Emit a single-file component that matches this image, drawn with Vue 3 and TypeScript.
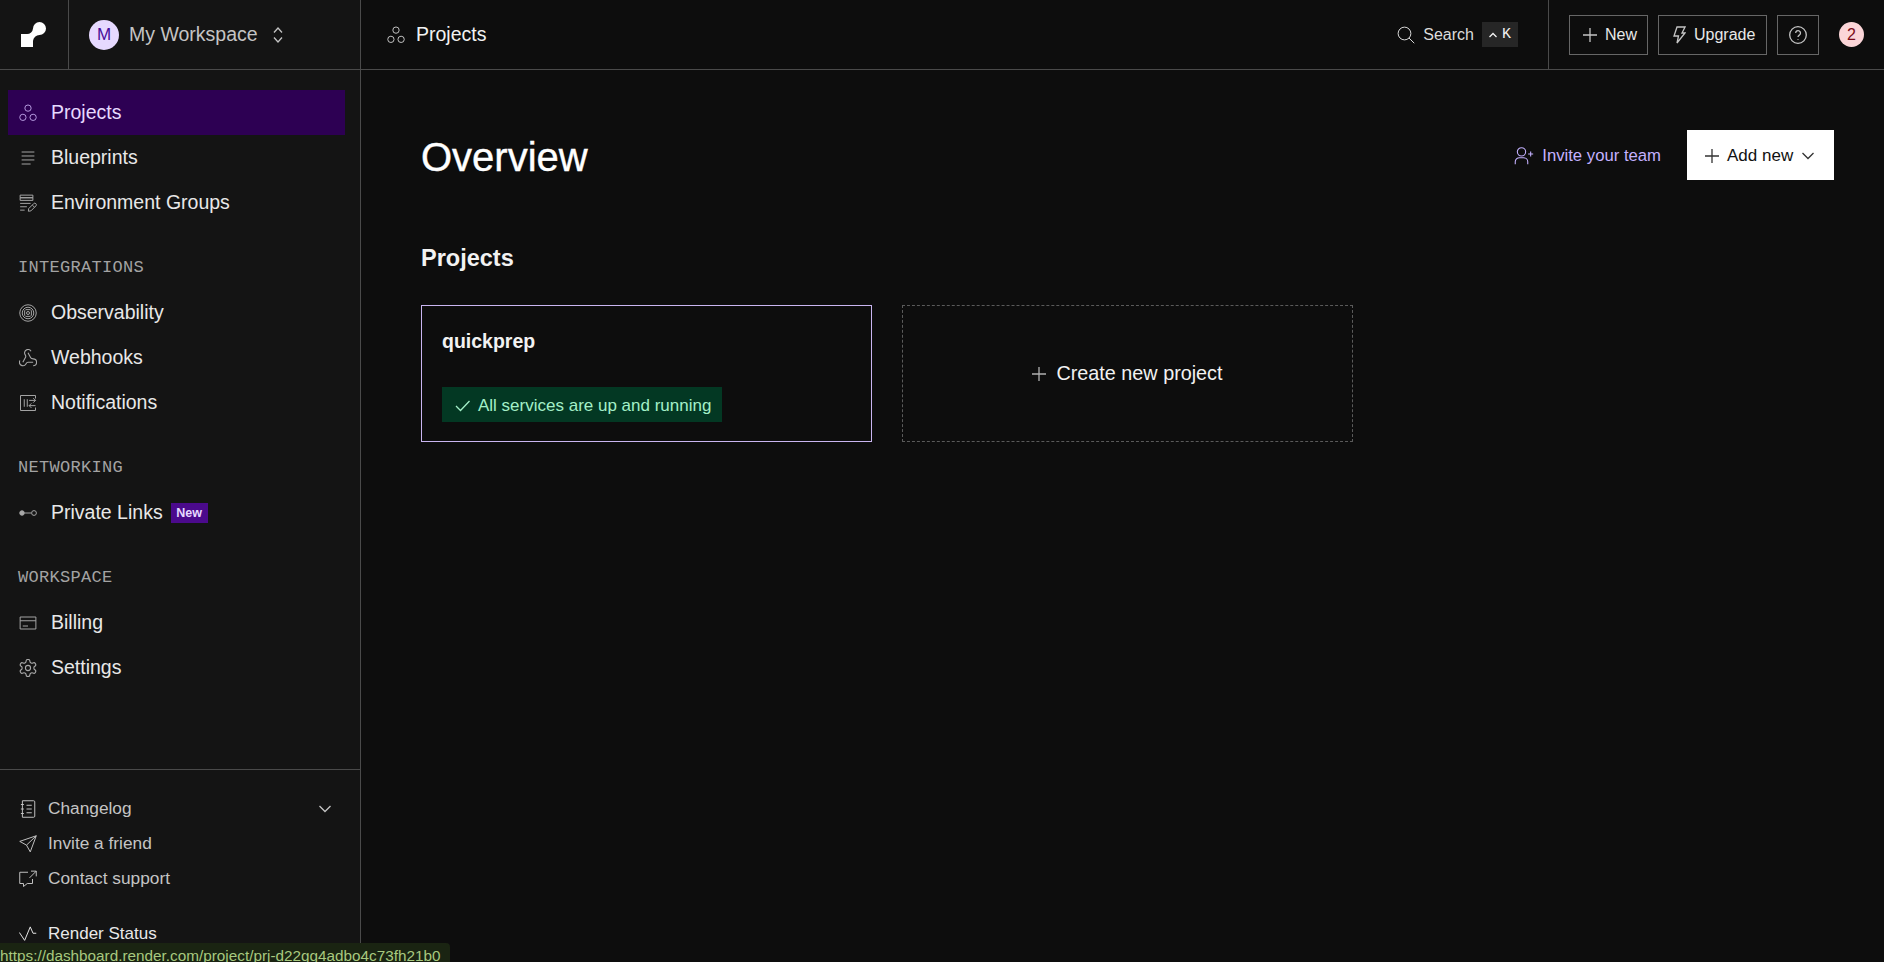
<script setup lang="ts">
interface NavItem {
  label: string
  icon: string
  active?: boolean
  tag?: string
}

interface NavSection {
  title?: string
  items: NavItem[]
}

const sections: NavSection[] = [
  {
    items: [
      { label: 'Projects', icon: 'projects', active: true },
      { label: 'Blueprints', icon: 'blueprints' },
      { label: 'Environment Groups', icon: 'env' },
    ],
  },
  {
    title: 'INTEGRATIONS',
    items: [
      { label: 'Observability', icon: 'observe' },
      { label: 'Webhooks', icon: 'webhook' },
      { label: 'Notifications', icon: 'notify' },
    ],
  },
  {
    title: 'NETWORKING',
    items: [{ label: 'Private Links', icon: 'link', tag: 'New' }],
  },
  {
    title: 'WORKSPACE',
    items: [
      { label: 'Billing', icon: 'billing' },
      { label: 'Settings', icon: 'settings' },
    ],
  },
]

const footerLinks = [
  { label: 'Changelog', icon: 'changelog' },
  { label: 'Invite a friend', icon: 'send' },
  { label: 'Contact support', icon: 'support' },
]

const iconPaths: Record<string, string> = {
  projects: 'M12 1.300a4.200 4.200 0 1 1 0 8.400 4.200 4.200 0 0 1 0-8.400zM5.200 13.600a4.200 4.200 0 1 1 0 8.400 4.200 4.200 0 0 1 0-8.400zM18.800 13.600a4.200 4.200 0 1 1 0 8.400 4.200 4.200 0 0 1 0-8.400z',
  blueprints: 'M3.500 4h17M3.500 9.300h17M3.500 14.600h17M3.500 20h12',
  env: 'M1.500 1.500h17v3.500h-17zM1.500 5h17v3.500h-17zM1.500 12.500h14M1.500 17h9M1.500 21.500h6M12.500 23l.4-3.500 6.600-6.600a2 2 0 0 1 3 3l-6.600 6.600zM18 15l2.500 2.500',
  observe: 'M12 1a11 11 0 1 0 0 22 11 11 0 0 0 0-22zM12 4.300a7.700 7.700 0 1 0 0 15.400 7.700 7.700 0 0 0 0-15.400zM9 7.500h6l1.500 1.500v6L15 16.500H9L7.500 15V9zM12 10a2 2 0 1 0 0 4 2 2 0 0 0 0-4z',
  webhook: 'M18 16.980h-5.990c-1.100 0-1.950.94-2.480 1.900A4 4 0 0 1 2 17c.01-.7.2-1.400.57-2M6 17l3.130-5.780c.53-.97.1-2.180-.5-3.100a4 4 0 1 1 6.890-4.060M12 6l3.130 5.730C15.660 12.700 16.900 13 18 13a4 4 0 0 1 0 8',
  notify: 'M22 6V2H2v20h20v-4M7 7v10M11 7v10M13.500 8.500H22M19 5.500l3 3-3 3M22 15.500h-8.500M16.500 12.500l-3 3 3 3',
  link: '',
  billing: 'M1.500 4h21v16h-21zM1.500 9h21M5 16h7',
  settings: 'M12.220 2h-.44a2 2 0 0 0-2 2v.18a2 2 0 0 1-1 1.730l-.43.25a2 2 0 0 1-2 0l-.15-.08a2 2 0 0 0-2.730.73l-.22.38a2 2 0 0 0 .73 2.730l.15.1a2 2 0 0 1 1 1.720v.51a2 2 0 0 1-1 1.740l-.15.09a2 2 0 0 0-.73 2.730l.22.38a2 2 0 0 0 2.730.73l.15-.08a2 2 0 0 1 2 0l.43.25a2 2 0 0 1 1 1.730V20a2 2 0 0 0 2 2h.44a2 2 0 0 0 2-2v-.18a2 2 0 0 1 1-1.730l.43-.25a2 2 0 0 1 2 0l.15.08a2 2 0 0 0 2.730-.73l.22-.39a2 2 0 0 0-.73-2.730l-.15-.08a2 2 0 0 1-1-1.740v-.5a2 2 0 0 1 1-1.740l.15-.09a2 2 0 0 0 .73-2.730l-.22-.38a2 2 0 0 0-2.730-.73l-.15.08a2 2 0 0 1-2 0l-.43-.25a2 2 0 0 1-1-1.730V4a2 2 0 0 0-2-2zM12 9a3 3 0 1 0 0 6 3 3 0 0 0 0-6z',
  changelog: 'M4.500 1h15a1.500 1.500 0 0 1 1.500 1.500v19a1.500 1.500 0 0 1-1.500 1.500h-15zM2.500 6h4M2.500 12h4M2.500 18h4M10 7h7M10 12h7M10 17h7',
  send: 'M23 1 1 8.500l9 5 5 9zM23 1 10 13.500',
  support: 'M12 3H1v15h5v4l5-4h7v-6M16 1.500h7v7M23 1.500l-9 9',
  status: 'M.5 10 7.500 20.500 15 2.500 18.700 11H23',
}

// these two are drawn on a 20 unit box inside the 24 unit grid
const viewBoxFor = (icon: string) =>
  icon === 'settings' || icon === 'webhook' ? '1.500 1.500 21 21' : '0 0 24 24'
</script>

<template>
  <div class="app">
    <header class="topbar">
      <div class="brand">
        <svg class="logo" viewBox="0 0 25 25" width="25" height="25">
          <path d="M12 25H0V12h6a6 6 0 0 0 6-5.500 6.500 6.500 0 1 1 6.500 6.500 6.500 6.500 0 0 0-6.500 6z" fill="#fff" />
        </svg>
      </div>
      <div class="workspace">
        <span class="ws-avatar">M</span>
        <span class="ws-name">My Workspace</span>
        <svg viewBox="0 0 12 18" width="12" height="18" class="stroke ws-caret"><path d="M2 6.500 6 2l4 4.500M2 11.500 6 16l4-4.500" /></svg>
      </div>
      <div class="crumb">
        <svg viewBox="0 0 24 24" width="18" height="18" class="stroke"><path :d="iconPaths.projects" /></svg>
        <span>Projects</span>
      </div>
      <div class="search">
        <svg viewBox="0 0 24 24" width="18" height="18" class="stroke"><path d="M10 1.500a8.500 8.500 0 1 0 0 17 8.500 8.500 0 0 0 0-17zM16 16l7 7" /></svg>
        <span>Search</span>
        <kbd><svg viewBox="0 0 10 10" width="10" height="10" class="stroke"><path d="M1.500 7 5 3.500 8.500 7" /></svg>K</kbd>
      </div>
      <div class="actions">
        <button class="ghost">
          <svg viewBox="0 0 14 14" width="14" height="14" class="stroke"><path d="M7 0v14M0 7h14" /></svg>New
        </button>
        <button class="ghost upgrade">
          <svg viewBox="0 0 14 18" width="14" height="18" class="stroke"><path d="M5 1h8l-3 6h3L5 17l1.500-7H2z" /></svg>Upgrade
        </button>
        <button class="ghost help">
          <svg viewBox="0 0 18 18" width="18" height="18" class="stroke"><circle cx="9" cy="9" r="8.300" /><path d="M6.700 7a2.400 2.400 0 1 1 3.600 2.100c-.8.500-1.300 1-1.300 2M9 13v.8" /></svg>
        </button>
        <span class="user-dot">2</span>
      </div>
    </header>

    <div class="body">
      <aside class="sidebar">
        <nav class="nav">
          <section v-for="(section, i) in sections" :key="i" class="nav-section">
            <h4 v-if="section.title">{{ section.title }}</h4>
            <a v-for="item in section.items" :key="item.label" class="nav-item" :class="{ active: item.active }">
              <svg v-if="item.icon === 'link'" viewBox="0 0 24 24" width="18" height="18" class="stroke">
                <circle cx="4" cy="12" r="3" fill="currentColor" /><path d="M7 12h9" /><circle cx="20" cy="12" r="3.200" />
              </svg>
              <svg v-else :viewBox="viewBoxFor(item.icon)" width="18" height="18" class="stroke"><path :d="iconPaths[item.icon]" /></svg>
              <span>{{ item.label }}</span>
              <em v-if="item.tag">{{ item.tag }}</em>
            </a>
          </section>
        </nav>
        <div class="side-footer">
          <a v-for="link in footerLinks" :key="link.label" class="foot-link">
            <svg viewBox="0 0 24 24" width="18" height="18" class="stroke"><path :d="iconPaths[link.icon]" /></svg>
            <span>{{ link.label }}</span>
            <svg v-if="link.icon === 'changelog'" class="stroke foot-caret" viewBox="0 0 12 12" width="12" height="12"><path d="M.5 3 6 8.500 11.500 3" /></svg>
          </a>
          <a class="foot-link status">
            <svg viewBox="0 0 24 24" width="18" height="18" class="stroke"><path :d="iconPaths.status" /></svg>
            <span>Render Status</span>
          </a>
        </div>
      </aside>

      <main class="main">
        <div class="heading">
          <h1>Overview</h1>
          <a class="invite">
            <svg viewBox="0 0 24 24" width="20" height="20" class="stroke"><path d="M9 2a5 5 0 1 0 0 10 5 5 0 0 0 0-10zM1.500 22v-3a5 5 0 0 1 5-5h5a5 5 0 0 1 5 5v3M20 6.500v6M17 9.500h6" /></svg>
            Invite your team
          </a>
          <button class="add">
            <svg viewBox="0 0 14 14" width="14" height="14" class="stroke"><path d="M7 0v14M0 7h14" /></svg>
            Add new
            <svg viewBox="0 0 12 12" width="12" height="12" class="stroke chev"><path d="M.5 3 6 8.500 11.500 3" /></svg>
          </button>
        </div>
        <h2>Projects</h2>
        <div class="cards">
          <article class="card">
            <h3>quickprep</h3>
            <span class="badge">
              <svg viewBox="0 0 15 15" width="15" height="15" class="stroke"><path d="M1 8l4.500 4.500L14.500 3" /></svg>
              All services are up and running
            </span>
          </article>
          <article class="card create">
            <svg viewBox="0 0 14 14" width="14" height="14" class="stroke"><path d="M7 0v14M0 7h14" /></svg>
            <span>Create new project</span>
          </article>
        </div>
      </main>
    </div>

    <div class="url-hint">https://dashboard.render.com/project/prj-d22gg4adbo4c73fh21b0</div>
  </div>
</template>

<style>
html, body {
  margin: 0;
  background: #0d0d0d;
  overflow: hidden;
}
</style>

<style scoped>
.app {
  height: 962px;
  display: flex;
  flex-direction: column;
  font-family: "Liberation Sans", Arial, sans-serif;
  color: #f2f2f2;
  background: #0d0d0d;
  overflow: hidden;
}

.stroke {
  fill: none;
  stroke: currentColor;
  stroke-width: 1.3;
  flex: none;
}

.topbar {
  height: 69px;
  flex: none;
  display: flex;
  align-items: center;
  border-bottom: 1px solid #4a4a4a;
}

.brand {
  width: 69px;
  height: 100%;
  display: flex;
  align-items: center;
  padding-left: 21px;
  background: #141414;
  border-right: 1px solid #4a4a4a;
  box-sizing: border-box;
}

.workspace {
  width: 292px;
  height: 100%;
  box-sizing: border-box;
  display: flex;
  align-items: center;
  gap: 10px;
  padding-left: 20px;
  background: #141414;
  border-right: 1px solid #4a4a4a;
  color: #c4c4c4;
}

.ws-avatar {
  width: 30px;
  height: 30px;
  border-radius: 50%;
  background: #e6d9ff;
  color: #4b0e99;
  font-size: 17px;
  display: flex;
  align-items: center;
  justify-content: center;
}

.ws-name {
  font-size: 19.500px;
}

.ws-caret {
  margin-left: 4px;
}

.crumb {
  display: flex;
  align-items: center;
  gap: 11px;
  padding-left: 26px;
  font-size: 19.500px;
  flex: 1;
}

.crumb svg {
  color: #c4c4c4;
}

.search {
  display: flex;
  align-items: center;
  gap: 8px;
  font-size: 16px;
  color: #dcdcdc;
  padding-right: 30px;
  height: 100%;
  border-right: 1px solid #4a4a4a;
}

kbd {
  box-sizing: border-box;
  width: 36px;
  display: flex;
  align-items: center;
  gap: 4px;
  height: 25px;
  padding-left: 6px;
  background: #262626;
  font-family: "Liberation Mono", monospace;
  font-size: 15px;
  color: #f2f2f2;
}

.actions {
  width: 335px;
  box-sizing: border-box;
  display: flex;
  align-items: center;
  gap: 10px;
  padding-left: 20px;
}

.ghost {
  height: 40px;
  padding: 0 10px 0 13px;
  display: flex;
  align-items: center;
  gap: 8px;
  background: transparent;
  border: 1px solid #666;
  color: #e8e8e8;
  font: 16px "Liberation Sans", Arial, sans-serif;
}

.ghost svg {
  color: #c4c4c4;
}

.upgrade {
  width: 109px;
  padding-right: 0;
}

.help {
  width: 42px;
  padding: 0;
  justify-content: center;
}

.user-dot {
  width: 25px;
  height: 25px;
  margin-left: 10px;
  border-radius: 50%;
  background: #fbd5d8;
  color: #7a0a17;
  font-size: 16px;
  display: flex;
  align-items: center;
  justify-content: center;
}

.body {
  flex: 1;
  display: flex;
  min-height: 0;
}

.sidebar {
  width: 361px;
  flex: none;
  box-sizing: border-box;
  background: #141414;
  border-right: 1px solid #4a4a4a;
  display: flex;
  flex-direction: column;
  justify-content: space-between;
}

.nav {
  padding: 20px 15px 0 8px;
}

.nav-section + .nav-section {
  margin-top: 20px;
}

h4 {
  margin: 0;
  padding-left: 10px;
  height: 45px;
  display: flex;
  align-items: center;
  font: 400 17px "Liberation Mono", monospace;
  letter-spacing: 0.3px;
  color: #a3a3a3;
}

.nav-item {
  height: 45px;
  display: flex;
  align-items: center;
  gap: 14px;
  padding-left: 11px;
  font-size: 19.500px;
  color: #e8e8e8;
}

.nav-item svg {
  color: #a8a8a8;
}

.nav-item.active {
  background: #2d0053;
  color: #e6d9ff;
}

.nav-item.active svg {
  color: #b79be0;
}

.nav-item em {
  margin-left: -6px;
  padding: 2px 5.600px;
  height: 16px;
  line-height: 16px;
  font-size: 12.500px;
  font-style: normal;
  font-weight: 700;
  background: #4b0a8c;
  color: #e6d9ff;
}

.side-footer {
  border-top: 1px solid #4a4a4a;
  padding: 21px 29px 11px 19px;
}

.foot-link {
  height: 35px;
  display: flex;
  align-items: center;
  gap: 11px;
  font-size: 17.300px;
  color: #c4c4c4;
}

.foot-caret {
  margin-left: auto;
}

.status {
  margin-top: 20px;
  font-size: 17px;
  color: #e8e8e8;
}

.main {
  flex: 1;
  padding: 60px 50px 0 60px;
}

.heading {
  display: flex;
  align-items: center;
  height: 50px;
}

h1 {
  margin: 0;
  flex: 1;
  padding-top: 5px;
  font-size: 40px;
  font-weight: 400;
  -webkit-text-stroke: 0.4px #fff;
  color: #fff;
}

.invite {
  display: flex;
  align-items: center;
  gap: 8px;
  padding-top: 2px;
  font-size: 16.700px;
  color: #c4b1ff;
  margin-right: 26px;
}

.add {
  width: 147px;
  height: 50px;
  padding: 2px 0 0 18px;
  border: 0;
  background: #fff;
  color: #111;
  display: flex;
  align-items: center;
  gap: 8px;
  font: 17px "Liberation Sans", Arial, sans-serif;
}

.add svg {
  color: #333;
}

.add .chev {
  margin-left: 1px;
}

h2 {
  margin: 63px 0 32px;
  line-height: 30px;
  font-size: 23.500px;
  font-weight: 700;
  color: #f2f2f2;
}

.cards {
  display: grid;
  grid-template-columns: 451px 451px;
  gap: 30px;
}

.card {
  height: 137px;
  box-sizing: border-box;
  border: 1px solid #c9b5f0;
  padding: 24px 20px 0;
  display: flex;
  flex-direction: column;
  align-items: flex-start;
}

.card h3 {
  margin: 0;
  line-height: 23px;
  font-size: 19.500px;
  font-weight: 700;
}

.badge {
  box-sizing: border-box;
  margin-top: 34px;
  height: 35px;
  padding: 2px 11px 0 13px;
  display: flex;
  align-items: center;
  gap: 8px;
  background: #033823;
  color: #a3f0c8;
  font-size: 17px;
}

.card.create {
  border: 1px dashed #5a5a5a;
  padding: 0;
  flex-direction: row;
  align-items: center;
  justify-content: center;
  gap: 10px;
  font-size: 19.800px;
}

.create svg {
  color: #b0b0b0;
}

.url-hint {
  position: fixed;
  left: 0;
  bottom: 0;
  width: 450px;
  height: 19px;
  background: #1a2412;
  border-top-right-radius: 4px;
  font-size: 15.300px;
  line-height: 26px;
  white-space: nowrap;
  overflow: hidden;
  color: #a8c97f;
}
</style>
